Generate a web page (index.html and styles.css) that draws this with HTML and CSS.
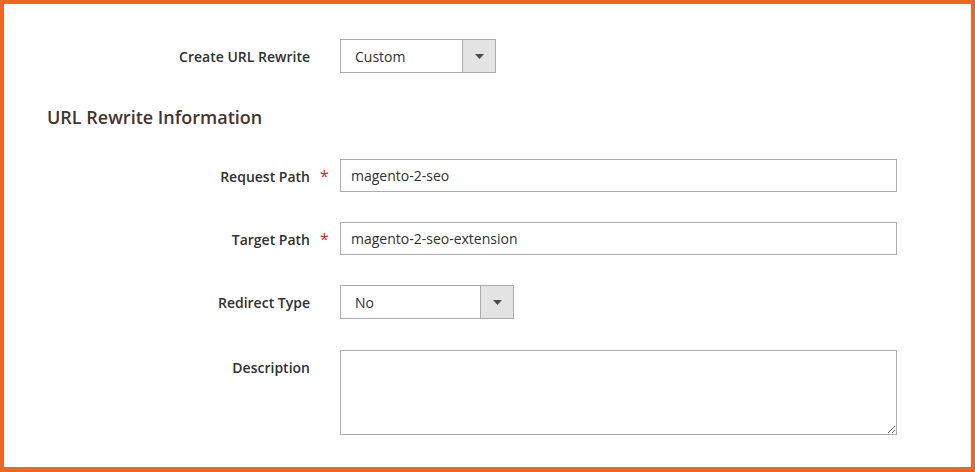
FILE: index.html
```html
<!DOCTYPE html>
<html>

<head>
    <title>URL Rewrite</title>
    <link rel="stylesheet" href="styles.css">
</head>

<body>
    <div class="page">
        <div class="field first">
            <label class="label">Create URL Rewrite</label>
            <span class="mark"></span>
            <div class="select select-wide">
                <span class="select-value">Custom</span>
                <span class="select-arrow">
                    <svg width="9" height="5" viewBox="0 0 9 5"><path d="M0 0 H9 L4.5 5 Z" fill="#514943"/></svg>
                </span>
            </div>
        </div>

        <h2 class="legend">URL Rewrite Information</h2>

        <div class="field">
            <label class="label" for="request-path">Request Path</label>
            <span class="mark">*</span>
            <input type="text" id="request-path" class="input" value="magento-2-seo">
        </div>

        <div class="field">
            <label class="label" for="target-path">Target Path</label>
            <span class="mark">*</span>
            <input type="text" id="target-path" class="input" value="magento-2-seo-extension">
        </div>

        <div class="field before-area">
            <label class="label">Redirect Type</label>
            <span class="mark"></span>
            <div class="select select-mid">
                <span class="select-value">No</span>
                <span class="select-arrow">
                    <svg width="9" height="5" viewBox="0 0 9 5"><path d="M0 0 H9 L4.5 5 Z" fill="#514943"/></svg>
                </span>
            </div>
        </div>

        <div class="field">
            <label class="label" for="description">Description</label>
            <span class="mark"></span>
            <textarea id="description" class="textarea"></textarea>
        </div>
    </div>
</body>

</html>
```

FILE: styles.css
```css
* {
    box-sizing: border-box;
}

html,
body {
    height: 100%;
}

body {
    margin: 0;
    font-family: "Open Sans", Arial, sans-serif;
    font-size: 14px;
    color: #303030;
    background-color: #fff;
}

.page {
    height: 100%;
    border: 4px solid #ea6822;
    border-bottom-width: 5px;
    padding-top: 35px;
    overflow: hidden;
}

.field {
    display: flex;
    align-items: flex-start;
    margin-bottom: 30px;
}

.field.first,
.field.before-area {
    margin-bottom: 31px;
}

.label {
    width: 306px;
    height: 33px;
    padding-top: 1px;
    text-align: right;
    font-weight: 600;
    line-height: 33px;
    color: #303030;
}

.mark {
    width: 30px;
    height: 33px;
    padding: 1px 0 0 10px;
    color: #e22626;
    font-size: 16px;
    line-height: 33px;
}

.legend {
    margin: 0 0 28px 43px;
    font-size: 18px;
    font-weight: 600;
    line-height: 27px;
    color: #41362f;
}

.input {
    width: 557px;
    height: 33px;
    padding: 0 10px;
    border: 1px solid #adadad;
    font-family: "Open Sans", Arial, sans-serif;
    font-size: 14px;
    color: #303030;
    outline: none;
}

.select {
    display: flex;
    height: 34px;
    border: 1px solid #adadad;
    background-color: #fff;
}

.select-wide {
    width: 156px;
}

.select-mid {
    width: 174px;
}

.select-value {
    flex: 1;
    padding-left: 14px;
    line-height: 33px;
}

.select-arrow {
    width: 33px;
    display: flex;
    align-items: center;
    justify-content: center;
    border-left: 1px solid #adadad;
    background-color: #e3e3e3;
}

.textarea {
    width: 557px;
    height: 85px;
    border: 1px solid #adadad;
    font-family: "Open Sans", Arial, sans-serif;
    font-size: 14px;
    resize: both;
    outline: none;
}
```
